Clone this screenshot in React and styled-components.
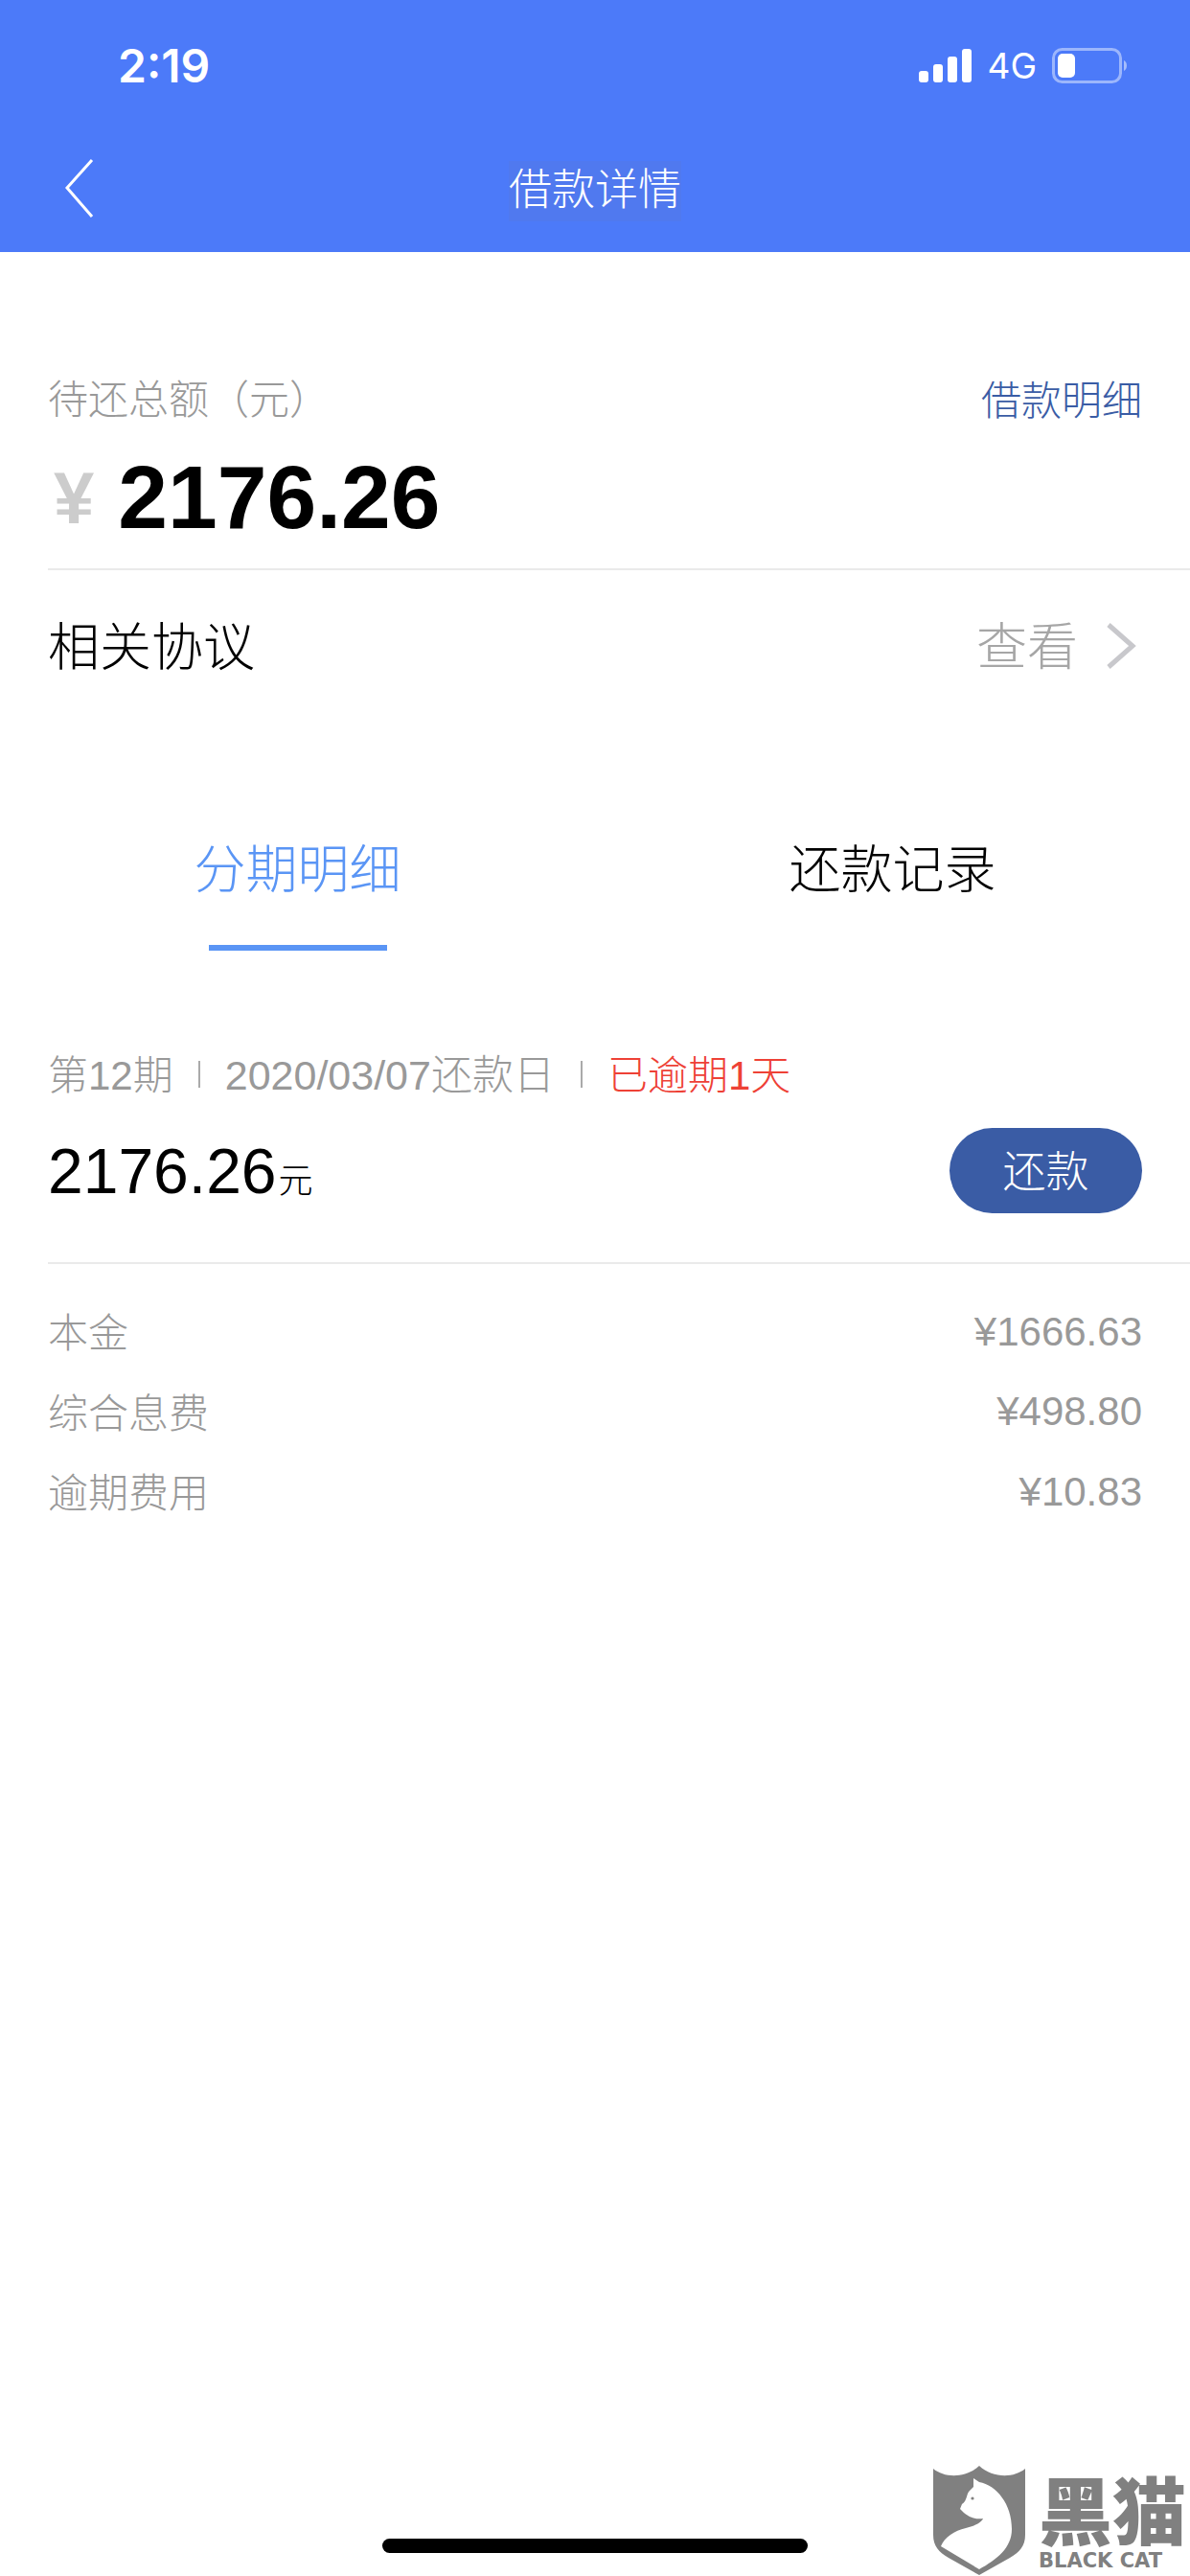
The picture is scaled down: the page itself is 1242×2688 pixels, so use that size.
import React from 'react';
import styled, { createGlobalStyle } from 'styled-components';

const GlobalStyle = createGlobalStyle`
  html, body {
    margin: 0;
    padding: 0;
    background: #fff;
  }
  body {
    font-family: "Liberation Sans", "Noto Sans CJK SC", sans-serif;
    overflow: hidden;
  }
  * { box-sizing: border-box; }
`;

const Page = styled.div`
  position: relative;
  width: 1242px;
  height: 2688px;
  display: flex;
  flex-direction: column;
  overflow: hidden;
  background: #fff;
`;

const Header = styled.header`
  height: 263px;
  background: #4c7af9;
  color: #fff;
`;

const StatusBar = styled.div`
  height: 136px;
  display: flex;
  align-items: center;
  justify-content: space-between;
  padding: 0 65px 0 123px;
`;

const Time = styled.span`
  font-family: Inter, "Liberation Sans", sans-serif;
  font-size: 48px;
  font-weight: 600;
`;

const StatusIcons = styled.div`
  display: flex;
  align-items: center;
  gap: 16px;
`;

const NetworkLabel = styled.span`
  font-family: Inter, "Liberation Sans", sans-serif;
  font-size: 37px;
`;

const NavBar = styled.div`
  height: 127px;
  display: grid;
  grid-template-columns: 1fr auto 1fr;
  align-items: center;
  padding-left: 66px;
  padding-right: 66px;
`;

const NavTitle = styled.h1`
  margin: 0;
  padding: 7px 0 9px;
  font-size: 45px;
  line-height: 47px;
  font-weight: 300;
  background: #5079ef;
`;

const Summary = styled.section`
  padding: 124px 0 0 50px;
`;

const SummaryTop = styled.div`
  display: flex;
  align-items: center;
  justify-content: space-between;
  height: 56px;
  padding-right: 50px;
`;

const Label = styled.span`
  margin-bottom: 3px;
  font-size: 42px;
  font-weight: 300;
  color: #999;
`;

const DetailLink = styled.a`
  margin-bottom: 2px;
  font-size: 42px;
  font-weight: 300;
  color: #3a5ca5;
`;

const TotalRow = styled.div`
  display: flex;
  align-items: center;
  height: 100px;
  margin: 26px 0 24px;
`;

const Currency = styled.span`
  font-size: 76px;
  font-weight: 700;
  color: #ccc;
  margin-left: 6px;
  margin-right: 25px;
`;

const TotalValue = styled.span`
  font-size: 93px;
  font-weight: 700;
  color: #000;
`;

const Divider = styled.div`
  height: 2px;
  margin-left: 50px;
  background: #eaeaea;
`;

const AgreementRow = styled.div`
  height: 158px;
  display: flex;
  align-items: center;
  justify-content: space-between;
  padding: 0 56px 0 50px;
`;

const AgreementTitle = styled.span`
  margin-bottom: 6px;
  font-size: 54px;
  font-weight: 300;
  color: #000;
`;

const ViewLink = styled.span`
  display: flex;
  align-items: center;
  gap: 29px;
  font-size: 53px;
  font-weight: 300;
  color: #a6a6a6;
`;

const ViewText = styled.span`
  margin-bottom: 6px;
`;

const Tabs = styled.div`
  display: grid;
  grid-template-columns: 1fr 1fr;
  padding-top: 120px;
`;

const Tab = styled.div`
  display: flex;
  flex-direction: column;
  align-items: center;
`;

const TabLabel = styled.span`
  height: 70px;
  line-height: 70px;
  font-size: 54px;
  font-weight: 300;
  color: ${props => (props.$active ? '#5a95f5' : '#000')};
`;

const TabLine = styled.div`
  width: 186px;
  height: 6px;
  margin-top: 43px;
  background: ${props => (props.$active ? '#5a95f5' : 'transparent')};
`;

const Installment = styled.section`
  padding: 98px 50px 51px;
`;

const InfoLine = styled.div`
  display: flex;
  align-items: center;
  height: 56px;
  font-size: 42px;
  font-weight: 300;
  color: #999;
`;

const DueDate = styled.span`
  font-size: 43px;
`;

const InfoSep = styled.i`
  width: 2px;
  height: 28px;
  margin: 6px 26px 0 ${props => props.$before}px;
  background: #aaa;
`;

const Overdue = styled.span`
  color: #ee4136;
`;

const AmountRow = styled.div`
  display: flex;
  align-items: center;
  justify-content: space-between;
  margin-top: 31px;
`;

const Amount = styled.span`
  font-size: 66px;
  color: #000;
`;

const AmountUnit = styled.span`
  font-size: 36px;
  font-weight: 300;
  margin-left: 2px;
`;

const RepayButton = styled.button`
  width: 201px;
  height: 89px;
  padding: 0 0 4px;
  border: 0;
  border-radius: 45px;
  background: #3a5ca5;
  color: #fff;
  font-family: inherit;
  font-size: 45px;
  font-weight: 300;
`;

const FeeList = styled.section`
  padding: 29px 50px 0;
`;

const FeeRow = styled.div`
  height: 83.5px;
  display: flex;
  align-items: center;
  justify-content: space-between;
  font-size: 42px;
  font-weight: 300;
  color: #999;
`;

const FeeName = styled.span`
  margin-bottom: 4px;
`;

const HomeBar = styled.div`
  position: absolute;
  left: 399px;
  bottom: 24px;
  width: 444px;
  height: 15px;
  border-radius: 8px;
  background: #000;
`;

const Watermark = styled.div`
  position: absolute;
  left: 974px;
  top: 2573px;
  display: flex;
  gap: 14px;
  color: #808080;
`;

const WatermarkText = styled.div`
  display: flex;
  flex-direction: column;
`;

const WatermarkName = styled.span`
  font-family: "Noto Sans CJK SC", sans-serif;
  font-size: 77px;
  line-height: 88px;
  font-weight: 900;
  white-space: nowrap;
`;

const WatermarkLatin = styled.span`
  font-family: "DejaVu Sans", sans-serif;
  font-size: 21px;
  line-height: 22px;
  font-weight: 700;
  white-space: nowrap;
`;

const fees = [
  { name: '本金', value: '¥1666.63' },
  { name: '综合息费', value: '¥498.80' },
  { name: '逾期费用', value: '¥10.83' },
];

function SignalIcon() {
  return (
    <svg width="55" height="35" viewBox="0 0 55 35" fill="#fff">
      <rect x="0" y="23" width="10" height="12" rx="3" />
      <rect x="15" y="16" width="10" height="19" rx="3" />
      <rect x="30" y="8" width="10" height="27" rx="3" />
      <rect x="45" y="0" width="10" height="35" rx="3" />
    </svg>
  );
}

function BatteryIcon() {
  return (
    <svg width="79" height="37" viewBox="0 0 79 37" fill="none">
      <rect x="1.5" y="1.5" width="70" height="34" rx="9" stroke="#fff" strokeOpacity="0.45" strokeWidth="3" />
      <rect x="6" y="6" width="18" height="25" rx="5" fill="#fff" />
      <path d="M75 13 C79 15 79 22 75 24 Z" fill="#fff" fillOpacity="0.5" />
    </svg>
  );
}

function BackIcon() {
  return (
    <svg width="32" height="68" viewBox="0 0 32 68" fill="none">
      <path d="M30 1 L4 30 L30 60" stroke="#fff" strokeWidth="3" />
    </svg>
  );
}

function ChevronIcon() {
  return (
    <svg width="32" height="48" viewBox="0 0 32 48" fill="none">
      <path d="M3 2 L28 24 L3 46" stroke="#c8c8cc" strokeWidth="5" />
    </svg>
  );
}

function BlackCatShield() {
  return (
    <svg width="96" height="115" viewBox="0 0 96 115">
      <path d="M0 3 C12 13 34 13 48 0 C62 13 84 13 96 3 V72 C96 84 90 90 80 96 L48 114 L16 96 C6 90 0 84 0 72 Z" fill="#808080" />
      <path d="M42 13 L48 17 C66 20 82 40 82 66 C82 86 66 98 48 108 L8 84 C12 74 22 68 34 65 C42 63 50 60 52 55 C44 56 36 54 28 45 L30 40 C36 36 34 30 38 26 L42 22 Z" fill="#fff" />
      <circle cx="41" cy="34" r="1.6" fill="#808080" />
    </svg>
  );
}

export default function App() {
  return (
    <Page>
      <GlobalStyle />
      <Header>
        <StatusBar>
          <Time>2:19</Time>
          <StatusIcons>
            <SignalIcon />
            <NetworkLabel>4G</NetworkLabel>
            <BatteryIcon />
          </StatusIcons>
        </StatusBar>
        <NavBar>
          <BackIcon />
          <NavTitle>借款详情</NavTitle>
        </NavBar>
      </Header>

      <Summary>
        <SummaryTop>
          <Label>待还总额（元）</Label>
          <DetailLink>借款明细</DetailLink>
        </SummaryTop>
        <TotalRow>
          <Currency>¥</Currency>
          <TotalValue>2176.26</TotalValue>
        </TotalRow>
      </Summary>
      <Divider />
      <AgreementRow>
        <AgreementTitle>相关协议</AgreementTitle>
        <ViewLink>
          <ViewText>查看</ViewText>
          <ChevronIcon />
        </ViewLink>
      </AgreementRow>

      <Tabs>
        <Tab>
          <TabLabel $active>分期明细</TabLabel>
          <TabLine $active />
        </Tab>
        <Tab>
          <TabLabel>还款记录</TabLabel>
          <TabLine />
        </Tab>
      </Tabs>

      <Installment>
        <InfoLine>
          <span>第12期</span>
          <InfoSep $before={26} />
          <DueDate>2020/03/07还款日</DueDate>
          <InfoSep $before={27} />
          <Overdue>已逾期1天</Overdue>
        </InfoLine>
        <AmountRow>
          <Amount>
            2176.26<AmountUnit>元</AmountUnit>
          </Amount>
          <RepayButton>还款</RepayButton>
        </AmountRow>
      </Installment>
      <Divider />

      <FeeList>
        {fees.map(fee => (
          <FeeRow key={fee.name}>
            <FeeName>{fee.name}</FeeName>
            <span>{fee.value}</span>
          </FeeRow>
        ))}
      </FeeList>

      <HomeBar />
      <Watermark>
        <BlackCatShield />
        <WatermarkText>
          <WatermarkName>黑猫</WatermarkName>
          <WatermarkLatin>BLACK CAT</WatermarkLatin>
        </WatermarkText>
      </Watermark>
    </Page>
  );
}
